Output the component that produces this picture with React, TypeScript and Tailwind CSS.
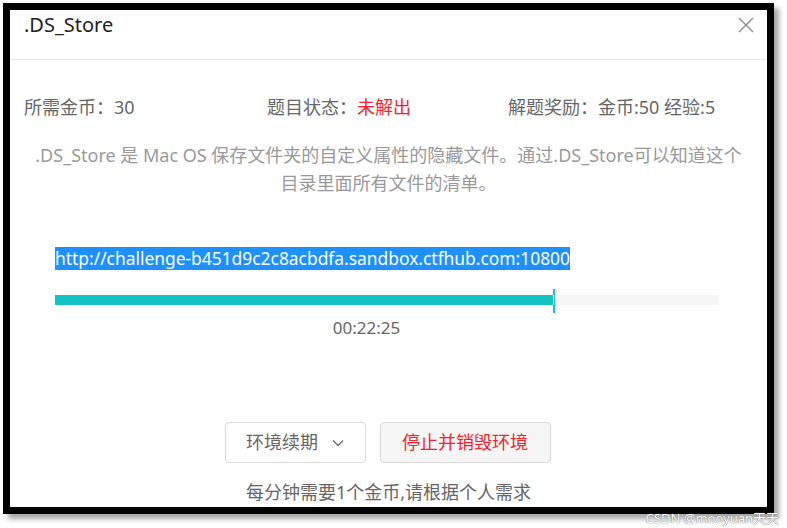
import React from "react";

const FONT = { fontFamily: '"Noto Sans", "Noto Sans CJK SC", sans-serif' };

const App = () => {
  const progress = 75; // percent of the bar that is used up

  return (
    <div className="w-[787px] h-[528px] bg-white relative overflow-hidden" style={FONT}>
      {/* framed dialog */}
      <div className="ml-[3px] mt-[3px] w-[771px] h-[511px] border-[7px] border-black bg-white shadow-[5px_5px_5px_rgba(0,0,0,0.35)] flex flex-col">
        {/* header */}
        <div className="h-[50px] border-b border-[#e8e8e8] flex items-start justify-between px-[14px] pt-[1px]">
          <h2 className="text-[20px] leading-[28px] text-[#222]">.DS_Store</h2>
          <button className="mt-[6px] mr-[-1px] text-[#8c8c8c]">
            <svg width="16" height="16" viewBox="0 0 16 16" fill="none" stroke="currentColor" strokeWidth="1.4">
              <path d="M1 1 L15 15 M15 1 L1 15" />
            </svg>
          </button>
        </div>

        {/* info row */}
        <div className="grid grid-cols-3 px-[14px] mt-[34px] text-[18px] leading-[26px] text-[#666]">
          <div>所需金币：30</div>
          <div>
            题目状态：<span className="text-[#f5222d]">未解出</span>
          </div>
          <div className="-ml-[2px]">解题奖励：金币:50 经验:5</div>
        </div>

        {/* description */}
        <p className="mt-[21px] px-[14px] text-center text-[18px] leading-[28px] text-[#999]">
          .DS_Store 是 Mac OS 保存文件夹的自定义属性的隐藏文件。通过.DS_Store可以知道这个
          <br />
          目录里面所有文件的清单。
        </p>

        {/* environment */}
        <div className="pl-[45px] pr-[48px] mt-[50px]">
          <div>
            <span className="inline-block bg-[#1e90ff] text-white text-[17.4px] leading-[23px]">
              http://challenge-b451d9c2c8acbdfa.sandbox.ctfhub.com:10800
            </span>
          </div>
          <div className="relative mt-[24px] h-[10px] bg-[#f5f5f5]">
            <div className="h-full bg-[#13c2c2]" style={{ width: `${progress}%` }} />
            <div
              className="absolute top-[-6px] w-[2px] h-[24px] bg-[#13c2c2]"
              style={{ left: `${progress}%` }}
            />
            <div className="absolute top-0 w-[1px] h-[10px] bg-white" style={{ left: `${progress}%` }} />
          </div>
          <div className="mt-[11px] text-center pr-[41px] text-[17px] leading-[24px] text-[#666]">
            00:22:25
          </div>
        </div>

        {/* actions */}
        <div className="mt-[82px] flex justify-center gap-[14px] pr-[2px]">
          <button className="w-[141px] h-[41px] rounded-[4px] border border-[#d9d9d9] bg-white text-[#666] text-[18px] flex items-center justify-center gap-[14px]">
            <span>环境续期</span>
            <svg width="12" height="8" viewBox="0 0 12 8" fill="none" stroke="currentColor" strokeWidth="1.3">
              <path d="M1 1.5 L6 6.5 L11 1.5" />
            </svg>
          </button>
          <button className="w-[171px] h-[41px] rounded-[4px] border border-[#d9d9d9] bg-[#f5f5f5] text-[#f5222d] text-[18px]">
            停止并销毁环境
          </button>
        </div>
        <p className="mt-[17px] text-center text-[18px] leading-[24px] text-[#666]">
          每分钟需要1个金币,请根据个人需求
        </p>
      </div>

      {/* watermark */}
      <div
        className="absolute right-[8px] bottom-[2px] text-[13px] leading-[16px] text-white"
        style={{ textShadow: "0 0 1px #777, 0 0 1px #777" }}
      >
        CSDN @mooyuan天天
      </div>
    </div>
  );
};

export default App;
